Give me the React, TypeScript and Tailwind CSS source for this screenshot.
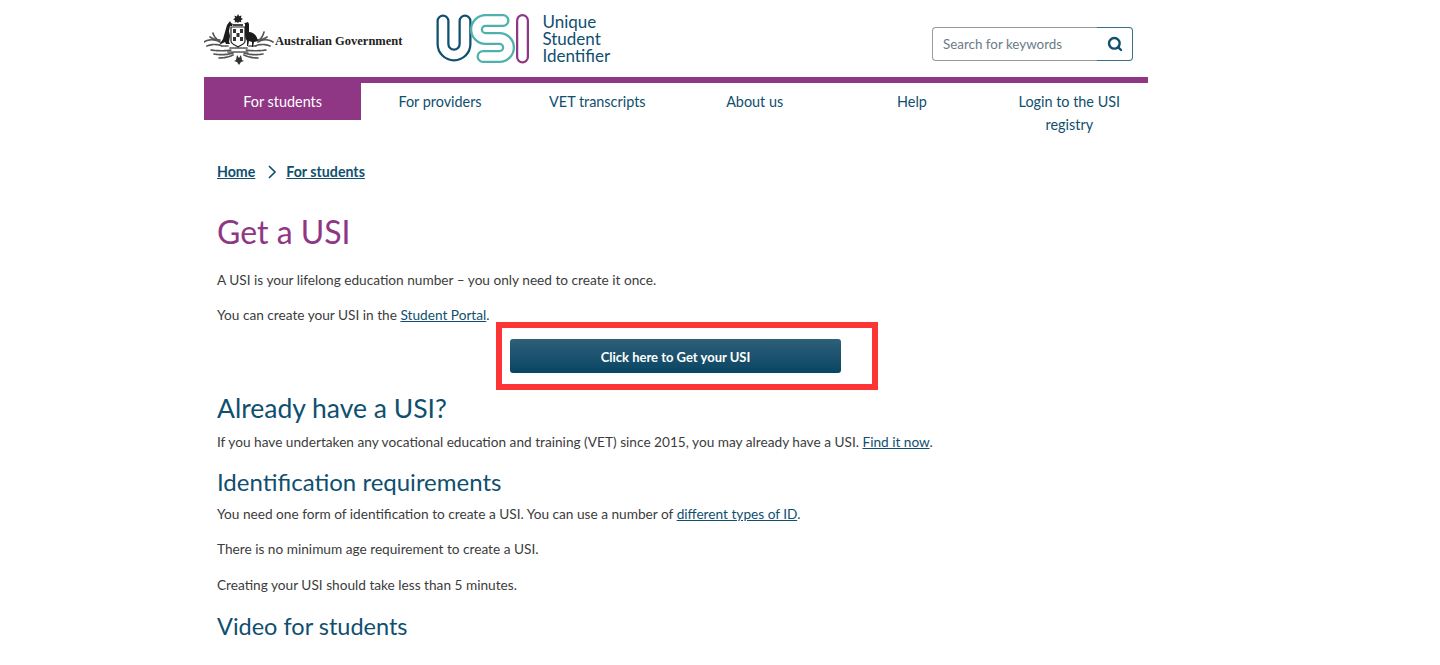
import React from 'react';
import { Search } from 'lucide-react';

const navItems = ['For students', 'For providers', 'VET transcripts', 'About us', 'Help', 'Login to the USI registry'];

function Crest() {
  return (
    <svg width="70" height="52" viewBox="0 0 70 52" className="shrink-0">
      {/* wattle */}
      <g fill="none" stroke="#555" strokeWidth="1.7" strokeDasharray="1.6 1" strokeLinecap="round">
        <path d="M0 29c5-3 10-3 16 0M3 33c5-2 10-2 15 0M6 24c3 2 6 3 10 3M9 20c1 3 2 5 5 7" />
        <path d="M69 29c-5-3-10-3-15 0M66 33c-5-2-10-2-15 0M63 24c-3 2-6 3-10 3M60 19c-1 3-2 6-5 8" />
        <path d="M7 37c7 1 14 1 20 0M62 37c-7 1-14 1-20 0M10 41c6 1 12 1 19-1M59 41c-6 1-12 1-19-1" />
        <path d="M15 45c5 0 10-1 14-3M54 45c-5 0-10-1-14-3M26 35l17 0M24 39h20" />
        <path d="M18 33h6M45 33h7" />
      </g>
      <path d="M33 42l2 3 2-3 1 5 2 1-3 1-2 3-2-3-3-1 2-1z" fill="#333" />
      {/* star */}
      <path d="M34 1l1.2 2.2 2.4-.8-.7 2.4 2.1 1.2-2.1 1.2.5 2.1-2.2-.6L34 10l-1.2-1.1-2.2.6.5-2.1-2.1-1.2 2.1-1.2-.7-2.4 2.4.8z" fill="#222" />
      <path d="M29 11h10v2H29z" fill="#444" />
      {/* kangaroo */}
      <path d="M26 8l1 2 2 1-1 2h-2l-1 5 1 5-1 6 1 2h-4l-1-2-6 3 4-6 2-7 2-7z" fill="#1c1c1c" />
      {/* emu */}
      <path d="M41 10l3-1 1 2v8c4 0 8 3 9 9l-4 1-1 5h-1v-5l-3-1-1 5h-1v-5c-2-3-3-8-2-13v-4l-1-1z" fill="#1c1c1c" />
      {/* shield */}
      <path d="M27 14h14v14c0 3-4 4-7 6-3-2-7-3-7-6z" fill="#fff" stroke="#222" strokeWidth="1.2" />
      <path d="M29 16h3v4h-3zM36 16h3v4h-3zM32.5 20h3v4h-3zM29 24h3v4h-3zM36 24h3v4h-3z" fill="#333" />
    </svg>
  );
}

function UsiLogo() {
  return (
    <svg width="94" height="50" viewBox="0 0 94 50" fill="none" strokeLinecap="round" strokeLinejoin="round" className="shrink-0">
      <path d="M7 7V30a11 11 0 0 0 22 0V7" stroke="#0f4f6f" strokeWidth="13" />
      <path d="M7 7V30a11 11 0 0 0 22 0V7" stroke="#fff" strokeWidth="8.5" />
      <path d="M67 6.5H49.5a9 9 0 0 0 0 18H63.5a9 9 0 0 1 0 18H47" stroke="#4fb1ac" strokeWidth="13" />
      <path d="M67 6.5H49.5a9 9 0 0 0 0 18H63.5a9 9 0 0 1 0 18H47" stroke="#fff" strokeWidth="8.5" />
      <path d="M86.5 6.5V43" stroke="#8f3684" strokeWidth="13" />
      <path d="M86.5 6.5V43" stroke="#fff" strokeWidth="8.5" />
    </svg>
  );
}

export default function App() {
  return (
    <div className="relative h-[665px] overflow-hidden bg-white pl-[204px] font-['Lato',sans-serif] text-[13.66px] text-[#3c3c3c]">
      <div className="w-[944px]">
        {/* Header */}
        <header className="flex h-[77px] items-center">
          <Crest />
          <span className="mt-[6px] ml-[1px] font-['Liberation_Serif',serif] text-[12.5px] font-bold text-[#222]">Australian Government</span>
          <div className="ml-[34px]"><UsiLogo /></div>
          <div className="ml-[12px] text-[17px] leading-[17px] text-[#0f4f6f]">
            Unique<br />Student<br />Identifier
          </div>
          <div className="mt-[10px] ml-auto mr-[15px] flex h-[34px] w-[201px]">
            <div className="flex flex-1 items-center rounded-l-[4px] border border-r-0 border-[#9a9a9a] pt-[2px] pl-[10px] text-[13.4px] text-[#6b7c86]">
              Search for keywords
            </div>
            <div className="flex w-[36px] items-center justify-center rounded-r-[4px] border border-l-0 border-[#3c6e87]">
              <Search size={16} strokeWidth={3.6} className="text-[#0f4f6f]" />
            </div>
          </div>
        </header>

        {/* Nav */}
        <nav className="grid h-[43px] grid-cols-6 border-t-[6px] border-[#8f3684]">
          {navItems.map((item, i) => (
            <a
              key={item}
              className={`h-[37px] px-[16px] pt-[7px] text-center text-[14.4px] leading-[23px] ${i === 0 ? 'bg-[#8f3684] text-white' : 'text-[#0f4f6f]'}`}
            >
              {item}
            </a>
          ))}
        </nav>

        {/* Breadcrumb */}
        <div className="mt-[44px] flex items-center pl-[13px] text-[14.2px] leading-[16px] font-bold text-[#0f4f6f]">
          <a className="underline">Home</a>
          <svg width="10" height="14" viewBox="0 0 10 14" fill="none" className="mr-[9px] ml-[12px]">
            <path d="M2 1l6 6-6 6" stroke="#0f4f6f" strokeWidth="1.6" />
          </svg>
          <a className="underline">For students</a>
        </div>

        {/* Content */}
        <main className="pl-[13px]">
          <h1 className="mt-[30px] text-[32px] leading-[44px] text-[#8f3684]">Get a USI</h1>
          <p className="mt-[16px] leading-[20px]">A USI is your lifelong education number – you only need to create it once.</p>
          <p className="mt-[15px] leading-[20px]">
            You can create your USI in the <a className="text-[#0f4f6f] underline">Student Portal</a>.
          </p>
          <div className="mt-[14px] w-[625px] pl-[293px]">
            <a className="flex h-[34px] w-[331px] items-center justify-center rounded-[3px] bg-gradient-to-b from-[#2d6079] to-[#064563] pt-[3px] text-[13px] font-bold text-white">
              Click here to Get your USI
            </a>
          </div>
          <h2 className="mt-[18px] text-[26.5px] leading-[34px] text-[#0f4f6f]">Already have a USI?</h2>
          <p className="mt-[7px] leading-[20px]">
            If you have undertaken any vocational education and training (VET) since 2015, you may already have a USI. <a className="text-[#0f4f6f] underline">Find it now</a>.
          </p>
          <h3 className="mt-[15px] text-[24px] leading-[30px] text-[#0f4f6f]">Identification requirements</h3>
          <p className="mt-[7px] leading-[20px]">
            You need one form of identification to create a USI. You can use a number of <a className="text-[#0f4f6f] underline">different types of ID</a>.
          </p>
          <p className="mt-[15px] leading-[20px]">There is no minimum age requirement to create a USI.</p>
          <p className="mt-[16px] leading-[20px]">Creating your USI should take less than 5 minutes.</p>
          <h3 className="mt-[16px] text-[23.5px] leading-[30px] text-[#0f4f6f]">Video for students</h3>
        </main>
      </div>

      {/* Annotation box over the button */}
      <div className="absolute left-[496px] top-[322px] h-[68px] w-[382px] border-[6px] border-[#fd3535]" />
    </div>
  );
}
